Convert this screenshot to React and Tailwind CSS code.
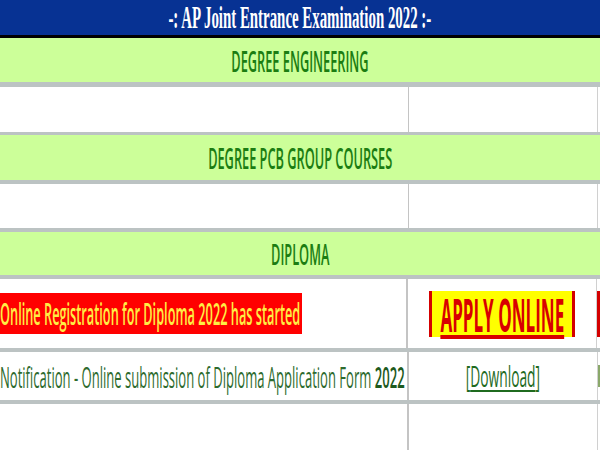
import React from "react";

const sans = { fontFamily: '"Open Sans", "Noto Sans", sans-serif' };

function Band({ children, h, b }) {
  return (
    <div className={`flex items-center justify-center bg-[#ccff99] border-b-[#bcc3c3] ${h} ${b}`}>
      <span
        style={sans}
        className="inline-block origin-center scale-x-[0.44] whitespace-nowrap text-[29px] font-semibold leading-none text-[#1b7d12]"
      >
        {children}
      </span>
    </div>
  );
}

export default function App() {
  return (
    <div className="w-[600px] h-[450px] overflow-hidden bg-white">
      <div className="flex h-[38px] items-center justify-center border-b-[3px] border-black bg-[#073293]">
        <span
          style={{ fontFamily: '"Liberation Serif", serif' }}
          className="inline-block origin-center scale-x-[0.48] whitespace-nowrap text-[31px] font-bold leading-none text-white"
        >
          -: AP Joint Entrance Examination 2022 :-
        </span>
      </div>

      <Band h="h-[49px]" b="border-b-[5px]">DEGREE ENGINEERING</Band>

      <div className="flex h-[48px] border-b-[3px] border-[#bcc3c3]">
        <div className="w-[409px] border-r border-[#c4c4c4]" />
        <div className="w-[189px] border-r border-[#d0d0d0]" />
      </div>

      <Band h="h-[49px]" b="border-b-[4px]">DEGREE PCB GROUP COURSES</Band>

      <div className="flex h-[48px] border-b-[4px] border-[#bcc3c3]">
        <div className="w-[409px] border-r border-[#c4c4c4]" />
        <div className="w-[189px] border-r border-[#d0d0d0]" />
      </div>

      <Band h="h-[47px]" b="border-b-[4px]">DIPLOMA</Band>

      <div className="flex h-[73px] border-b-[4px] border-[#bcc3c3]">
        <div className="flex w-[409px] items-center border-r-2 border-[#c4c4c4]">
          <div className="flex h-[41px] w-[302px] items-center overflow-hidden bg-[#ff0000]">
            <span
              style={sans}
              className="inline-block origin-left scale-x-[0.425] whitespace-nowrap text-[30px] font-semibold leading-none text-[#ffee44]"
            >
              Online Registration for Diploma 2022 has started
            </span>
          </div>
        </div>
        <div className="flex w-[189px] items-center justify-center border-r border-[#d0d0d0]">
          <div className="flex h-[46px] w-[146px] items-center justify-center border-x-[3px] border-[#d40000] bg-[#ffff00]">
            <span
              style={sans}
              className="inline-block origin-center scale-x-[0.37] whitespace-nowrap text-[46px] font-bold leading-none text-[#d80000] underline decoration-[4px] underline-offset-[3px]"
            >
              APPLY ONLINE
            </span>
          </div>
        </div>
        <div className="flex flex-1 items-center">
          <div className="h-[46px] w-[3px] bg-[#d40000]" />
        </div>
      </div>

      <div className="flex h-[52px] border-b-[4px] border-[#bcc3c3]">
        <div className="flex w-[409px] items-center border-r-2 border-[#c4c4c4]">
          <span
            style={sans}
            className="inline-block origin-left scale-x-[0.45] whitespace-nowrap text-[29px] leading-none text-[#2e6b2e]"
          >
            Notification - Online submission of Diploma Application Form <span className="font-semibold text-[#1d5a1d]">2022</span>
          </span>
        </div>
        <div className="flex w-[189px] items-center justify-center border-r border-[#d0d0d0]">
          <span
            style={sans}
            className="inline-block origin-center scale-x-[0.46] whitespace-nowrap text-[30px] leading-none text-[#1f6b1f]"
          >
            [<span className="underline decoration-[2px] underline-offset-[3px]">Download</span>]
          </span>
        </div>
        <div className="flex flex-1 items-center">
          <div className="h-[22px] w-[2px] bg-[#8aa86a]" />
        </div>
      </div>

      <div className="flex h-[60px]">
        <div className="w-[409px] border-r-2 border-[#c4c4c4]" />
        <div className="w-[189px] border-r border-[#d0d0d0]" />
      </div>
    </div>
  );
}
